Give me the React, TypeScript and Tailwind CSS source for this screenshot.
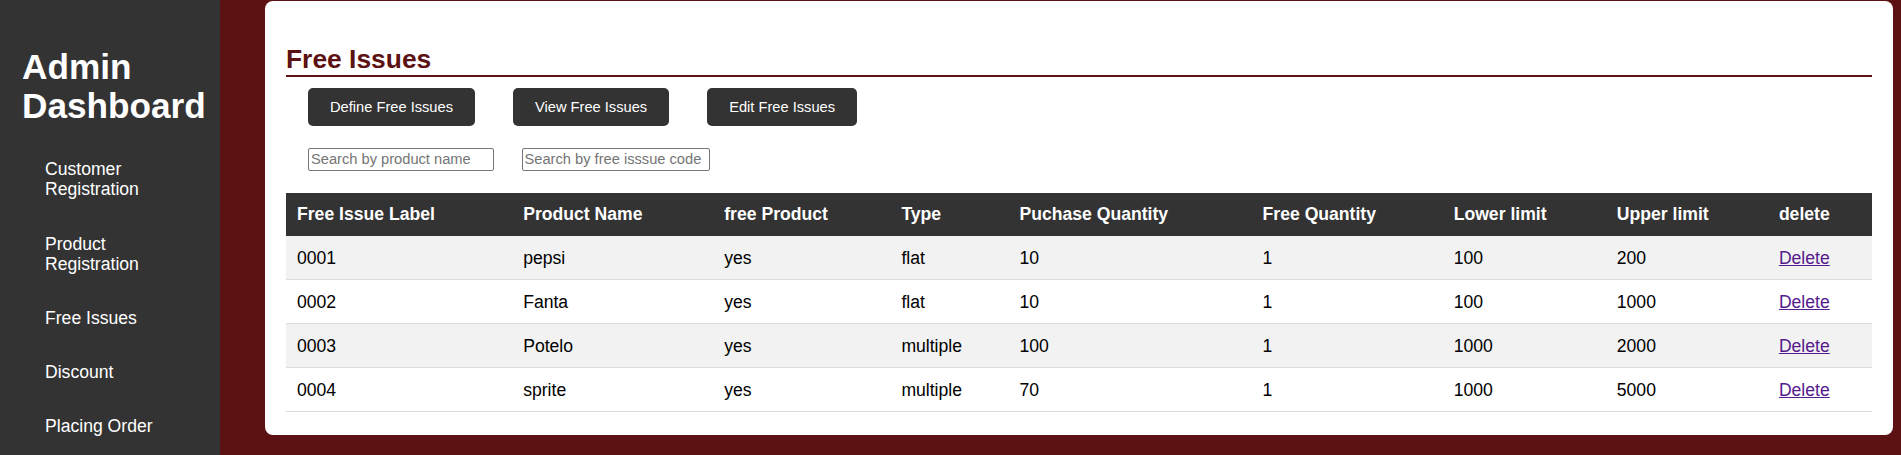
import React from "react";

const navItems = [
    "Customer Registration",
    "Product Registration",
    "Free Issues",
    "Discount",
    "Placing Order",
];

const columns = [
    { label: "Free Issue Label", width: "w-[226px]" },
    { label: "Product Name", width: "w-[201px]" },
    { label: "free Product", width: "w-[177px]" },
    { label: "Type", width: "w-[118px]" },
    { label: "Puchase Quantity", width: "w-[243px]" },
    { label: "Free Quantity", width: "w-[191px]" },
    { label: "Lower limit", width: "w-[163px]" },
    { label: "Upper limit", width: "w-[162px]" },
    { label: "delete", width: "w-[104px]" },
];

const rows = [
    ["0001", "pepsi", "yes", "flat", "10", "1", "100", "200"],
    ["0002", "Fanta", "yes", "flat", "10", "1", "100", "1000"],
    ["0003", "Potelo", "yes", "multiple", "100", "1", "1000", "2000"],
    ["0004", "sprite", "yes", "multiple", "70", "1", "1000", "5000"],
];

const buttons = ["Define Free Issues", "View Free Issues", "Edit Free Issues"];

const Sidebar: React.FC = () => {
    return (
        <aside className="w-[220px] shrink-0 bg-[#333333] text-white">
            <h1 className="pl-[22px] pr-[10px] pt-[47px] text-[35.2px] font-bold leading-[39.1px]">
                Admin Dashboard
            </h1>
            <ul className="mt-[17px]">
                {navItems.map((item) => (
                    <li key={item} className="py-[17px] pl-[45px] pr-[28px] text-[17.6px] leading-[20.2px]">
                        {item}
                    </li>
                ))}
            </ul>
        </aside>
    );
};

const FreeIssuesTable: React.FC = () => {
    return (
        <table className="mt-[22px] w-full table-fixed border-collapse text-left text-[17.6px]">
            <thead>
                <tr className="bg-[#333333] text-white">
                    {columns.map((col) => (
                        <th key={col.label} className={`${col.width} px-[11px] py-[11.5px] font-bold leading-[20px]`}>
                            {col.label}
                        </th>
                    ))}
                </tr>
            </thead>
            <tbody>
                {rows.map((row, i) => (
                    <tr key={row[0]} className={`border-b border-[#dddddd] text-black ${i % 2 === 0 ? "bg-[#f2f2f2]" : "bg-white"}`}>
                        {row.map((cell, j) => (
                            <td key={j} className="px-[11px] pt-[12px] pb-[11px] leading-[20px]">
                                {cell}
                            </td>
                        ))}
                        <td className="px-[11px] pt-[12px] pb-[11px] leading-[20px]">
                            <a href="#" className="text-[#551a8b] underline">
                                Delete
                            </a>
                        </td>
                    </tr>
                ))}
            </tbody>
        </table>
    );
};

export default function App() {
    return (
        <div className="flex min-h-[455px] bg-[#5c1212] font-['Liberation_Sans',Arial,sans-serif]">
            <Sidebar />
            <main className="flex-1 pl-[45px] pr-[8px] pt-[1px]">
                <div className="rounded-[8px] bg-white px-[21px] pb-[23px] pt-[42.7px]">
                    <h2 className="border-b-2 border-[#5c1212] pb-[1.3px] text-[26.4px] font-bold leading-[30px] text-[#5c1212]">
                        Free Issues
                    </h2>
                    <div className="mt-[11px] flex gap-[38px] pl-[22px]">
                        {buttons.map((b) => (
                            <button key={b} className="h-[38px] rounded-[5px] bg-[#333333] px-[22px] text-[14.67px] text-white">
                                {b}
                            </button>
                        ))}
                    </div>
                    <div className="mt-[22px] flex gap-[27.5px] pl-[22px]">
                        <input
                            type="text"
                            placeholder="Search by product name"
                            className="h-[23px] w-[186px] rounded-[2px] border border-[#767676] px-[2px] text-[14.67px] placeholder:text-[#757575]"
                        />
                        <input
                            type="text"
                            placeholder="Search by free isssue code"
                            className="h-[23px] w-[188px] rounded-[2px] border border-[#767676] px-[2px] text-[14.67px] placeholder:text-[#757575]"
                        />
                    </div>
                    <FreeIssuesTable />
                </div>
            </main>
        </div>
    );
}
